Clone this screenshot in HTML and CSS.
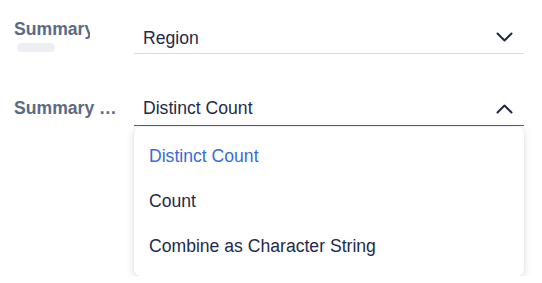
FILE: index.html
```html
<!DOCTYPE html>
<html>
<head>
<meta charset="utf-8">
<link rel="stylesheet" href="styles.css">
</head>
<body>
<div class="form">
  <div class="row row-first">
    <div class="label-col">
      <div class="label label-clip">Summary</div>
      <div class="pill"></div>
    </div>
    <div class="select select-idle">
      <span class="value">Region</span>
      <svg class="chev chev-down" width="17" height="10" viewBox="0 0 17 10"><polyline points="1.5,1.5 8.5,8.5 15.5,1.5" fill="none" stroke="#1d2b4a" stroke-width="2" stroke-linecap="round" stroke-linejoin="round"/></svg>
    </div>
  </div>
  <div class="row row-second">
    <div class="label-col">
      <div class="label label-ellipsis">Summary method</div>
    </div>
    <div class="select-wrap">
      <div class="select select-open">
        <span class="value">Distinct Count</span>
        <svg class="chev chev-up" width="17" height="10" viewBox="0 0 17 10"><polyline points="1.5,8.5 8.5,1.5 15.5,8.5" fill="none" stroke="#1d2b4a" stroke-width="2" stroke-linecap="round" stroke-linejoin="round"/></svg>
      </div>
      <div class="menu">
        <div class="item item-selected">Distinct Count</div>
        <div class="item">Count</div>
        <div class="item">Combine as Character String</div>
      </div>
    </div>
  </div>
</div>
</body>
</html>
```

FILE: styles.css
```css
html, body {
  margin: 0;
  padding: 0;
  background: #ffffff;
}
body {
  font-family: "Liberation Sans", Arial, sans-serif;
  font-size: 17.6px;
  color: #1d2b4a;
}
.form {
  padding-left: 14px;
  width: 510px;
}
.row {
  display: flex;
  align-items: flex-start;
}
.row-first {
  padding-top: 17px;
}
.row-second {
  margin-top: 42px;
}
.label-col {
  width: 120px;
  flex: none;
}
.label {
  font-weight: bold;
  color: #5b6a85;
  line-height: 24px;
  white-space: nowrap;
  overflow: hidden;
}
.label-clip {
  width: 76px;
}
.label-ellipsis {
  width: 104px;
  text-overflow: ellipsis;
}
.pill {
  width: 38px;
  height: 9px;
  border-radius: 5px;
  background: #eceef2;
  margin-top: 2px;
  margin-left: 3px;
}
.select-wrap {
  width: 390px;
  display: flex;
  flex-direction: column;
}
.select {
  width: 390px;
  display: flex;
  align-items: center;
  justify-content: space-between;
  box-sizing: border-box;
  padding-left: 9px;
  padding-right: 11px;
  line-height: 24px;
}
.select-idle {
  margin-top: 9px;
  padding-bottom: 3px;
  border-bottom: 1px solid #dadce0;
}
.select-open {
  padding-bottom: 5px;
  border-bottom: 1px solid #2f62c8;
}
.chev {
  display: block;
}
.chev-down {
  margin-top: -3px;
}
.chev-up {
  margin-top: 1px;
}
.menu {
  margin-top: 1px;
  width: 390px;
  padding: 7px 0;
  background: #ffffff;
  border-radius: 6px;
  box-shadow: 0 2px 8px rgba(20, 30, 60, 0.14), 0 0 2px rgba(20, 30, 60, 0.08);
  box-sizing: border-box;
}
.item {
  height: 45px;
  line-height: 45px;
  padding-left: 15px;
  color: #1d2b4a;
  white-space: nowrap;
}
.item-selected {
  color: #3a6bd8;
}
```
